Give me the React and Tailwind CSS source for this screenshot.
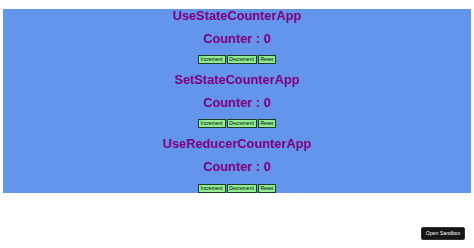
import React, { useState, useReducer } from "react";

const Buttons = ({ onInc, onDec, onReset }) => (
  <div className="flex justify-center gap-[1px] h-[9px]">
    <button
      onClick={onInc}
      className="bg-[#90ee90] border border-[#1f3d1f] px-[1.8px] text-[5px] leading-[7px] text-black"
    >
      Increment
    </button>
    <button
      onClick={onDec}
      className="bg-[#90ee90] border border-[#1f3d1f] px-[1.8px] text-[5px] leading-[7px] text-black"
    >
      Decrement
    </button>
    <button
      onClick={onReset}
      className="bg-[#90ee90] border border-[#1f3d1f] px-[1.8px] text-[5px] leading-[7px] text-black"
    >
      Reset
    </button>
  </div>
);

const Section = ({ title, count, onInc, onDec, onReset, last }) => (
  <div className={last ? "" : "mb-[8.6px]"}>
    <h1 className="text-[12.8px] leading-[14.7px] font-bold text-[#800080]">
      {title}
    </h1>
    <h1 className="mt-[8.6px] text-[12.8px] leading-[14.7px] font-bold text-[#800080]">
      Counter : {count}
    </h1>
    <div className="mt-[8.6px]">
      <Buttons onInc={onInc} onDec={onDec} onReset={onReset} />
    </div>
  </div>
);

const reducer = (state, action) => {
  switch (action) {
    case "inc":
      return state + 1;
    case "dec":
      return state - 1;
    default:
      return 0;
  }
};

export default function App() {
  const [a, setA] = useState(0);
  const [b, setB] = useState(0);
  const [c, dispatch] = useReducer(reducer, 0);

  return (
    <div
      className="min-h-[248px] bg-white pt-[8.6px] px-[3.2px]"
      style={{ fontFamily: '"Liberation Sans", Arial, sans-serif' }}
    >
      <div className="bg-[#6495ed] text-center">
        <Section
          title="UseStateCounterApp"
          count={a}
          onInc={() => setA(a + 1)}
          onDec={() => setA(a - 1)}
          onReset={() => setA(0)}
        />
        <Section
          title="SetStateCounterApp"
          count={b}
          onInc={() => setB((v) => v + 1)}
          onDec={() => setB((v) => v - 1)}
          onReset={() => setB(0)}
        />
        <Section
          title="UseReducerCounterApp"
          count={c}
          onInc={() => dispatch("inc")}
          onDec={() => dispatch("dec")}
          onReset={() => dispatch("reset")}
          last
        />
      </div>

      {/* sandbox badge */}
      <button className="fixed right-[9px] bottom-[8px] w-[44px] h-[13px] rounded-[2px] bg-[#151515] border border-[#333] text-white text-[5.2px] leading-[11px]">
        Open Sandbox
      </button>
    </div>
  );
}
